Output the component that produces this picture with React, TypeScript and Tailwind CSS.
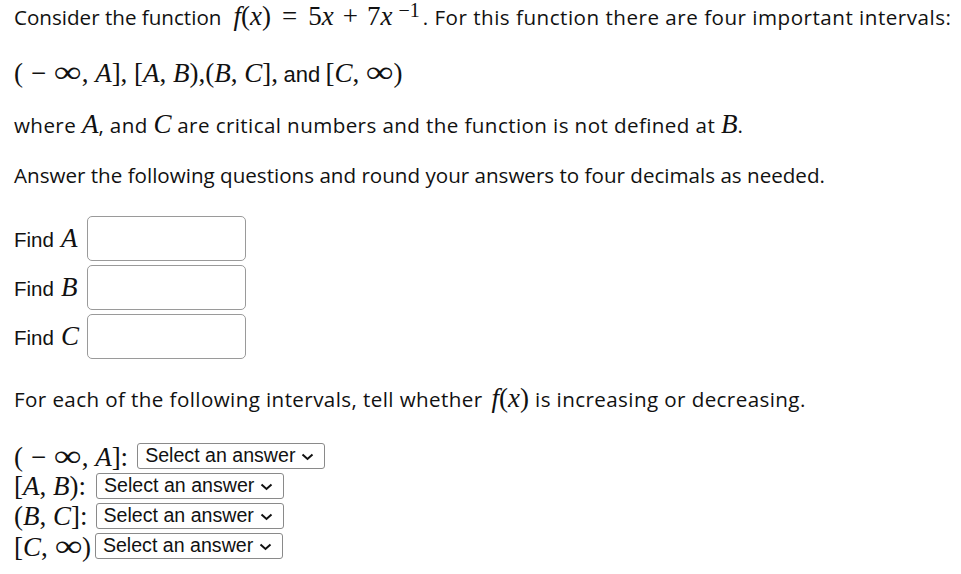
import React from "react";

const Math = ({ children }: { children: React.ReactNode }) => (
  <span className="text-[27px] font-['Liberation_Serif',serif] whitespace-nowrap tracking-normal">{children}</span>
);

const Inf = () => (
  <span className="inline-block text-[30px] leading-none scale-x-[1.3] mx-[3px]">∞</span>
);
const Minus = () => <span className="mx-[8px]">−</span>;

function Select() {
  return (
    <div className="w-[188px] shrink-0 h-[26px] flex items-center border border-[#8a8a8a] rounded-[3px] pl-[7px] bg-white font-['Liberation_Sans',Arial,sans-serif] text-[19.6px] leading-none text-[#111] whitespace-nowrap">
      <span>Select an answer</span>
      <svg width="13" height="8" viewBox="0 0 13 8" className="ml-[6px] mt-[1px]">
        <path d="M1.5 1.5 L6.5 6 L11.5 1.5" fill="none" stroke="#111" strokeWidth="2" />
      </svg>
    </div>
  );
}

function FindRow({ v }: { v: string }) {
  return (
    <div className="flex items-center h-[45px]">
      <span className="w-[73px] font-['Liberation_Sans',Arial,sans-serif] text-[20.5px] text-[#111] whitespace-nowrap">
        Find<span className="ml-[7px]"><Math><i>{v}</i></Math></span>
      </span>
      <div className="w-[159px] h-[45px] border border-[#9a9a9a] rounded-[5px] bg-white" />
    </div>
  );
}

function SelRow({ gap, children }: { gap: string; children: React.ReactNode }) {
  return (
    <div className="flex items-center h-[26px]">
      <span className="leading-none whitespace-nowrap">{children}</span>
      <span className={`${gap} shrink-0`} />
      <Select />
    </div>
  );
}

export default function App() {
  return (
    <div className="w-[961px] h-[574px] bg-white text-[#111] pl-[14px] font-['Open_Sans',sans-serif] text-[20.6px]">
      <div className="h-[34px] leading-[34px] whitespace-nowrap -mt-[1px]">
        Consider the function
        <span className="ml-[12px]">
          <Math>
            <i>f</i>(<i>x</i>)<span className="mx-[11px]">=</span>5<i>x</i><span className="mx-[9px]">+</span>7<i>x</i>
            <sup className="text-[20px] relative -top-[8px] ml-[6px]">−1</sup>
          </Math>
        </span>
        <span className="tracking-[0.5px] ml-[3px]">. For this function there are four important intervals:</span>
      </div>
      <div className="mt-[23px] h-[34px] leading-[34px] whitespace-nowrap">
        <Math>
          (<Minus /><Inf />, <i>A</i>], [<i>A</i>, <i>B</i>),(<i>B</i>, <i>C</i>],
        </Math>{" "}
        <span className="font-['Liberation_Sans',Arial,sans-serif] text-[22px]">and</span>{" "}
        <Math>
          [<i>C</i>, <Inf />)
        </Math>
      </div>
      <div className="mt-[17px] h-[34px] leading-[34px] whitespace-nowrap tracking-[0.4px]">
        where <Math><i>A</i></Math>, and <Math><i>C</i></Math> are critical numbers and the function is not defined at <Math><i>B</i></Math>.
      </div>
      <div className="mt-[17px] h-[34px] leading-[34px] whitespace-nowrap">
        Answer the following questions and round your answers to four decimals as needed.
      </div>
      <div className="mt-[24px] flex flex-col gap-[4px]">
        <FindRow v="A" />
        <FindRow v="B" />
        <FindRow v="C" />
      </div>
      <div className="mt-[22px] h-[34px] leading-[34px] whitespace-nowrap tracking-[0.4px]">
        For each of the following intervals, tell whether
        <span className="ml-[9px] mr-[6px]"><Math><i>f</i>(<i>x</i>)</Math></span>
        is increasing or decreasing.
      </div>
      <div className="mt-[28px] flex flex-col gap-[4px]">
        <SelRow gap="w-[9px]"><Math>(<Minus /><Inf />, <i>A</i>]:</Math></SelRow>
        <SelRow gap="w-[10px]"><Math>[<i>A</i>, <i>B</i>):</Math></SelRow>
        <SelRow gap="w-[8px]"><Math>(<i>B</i>, <i>C</i>]:</Math></SelRow>
        <SelRow gap="w-[4px]"><Math>[<i>C</i>, <Inf />)</Math></SelRow>
      </div>
    </div>
  );
}
